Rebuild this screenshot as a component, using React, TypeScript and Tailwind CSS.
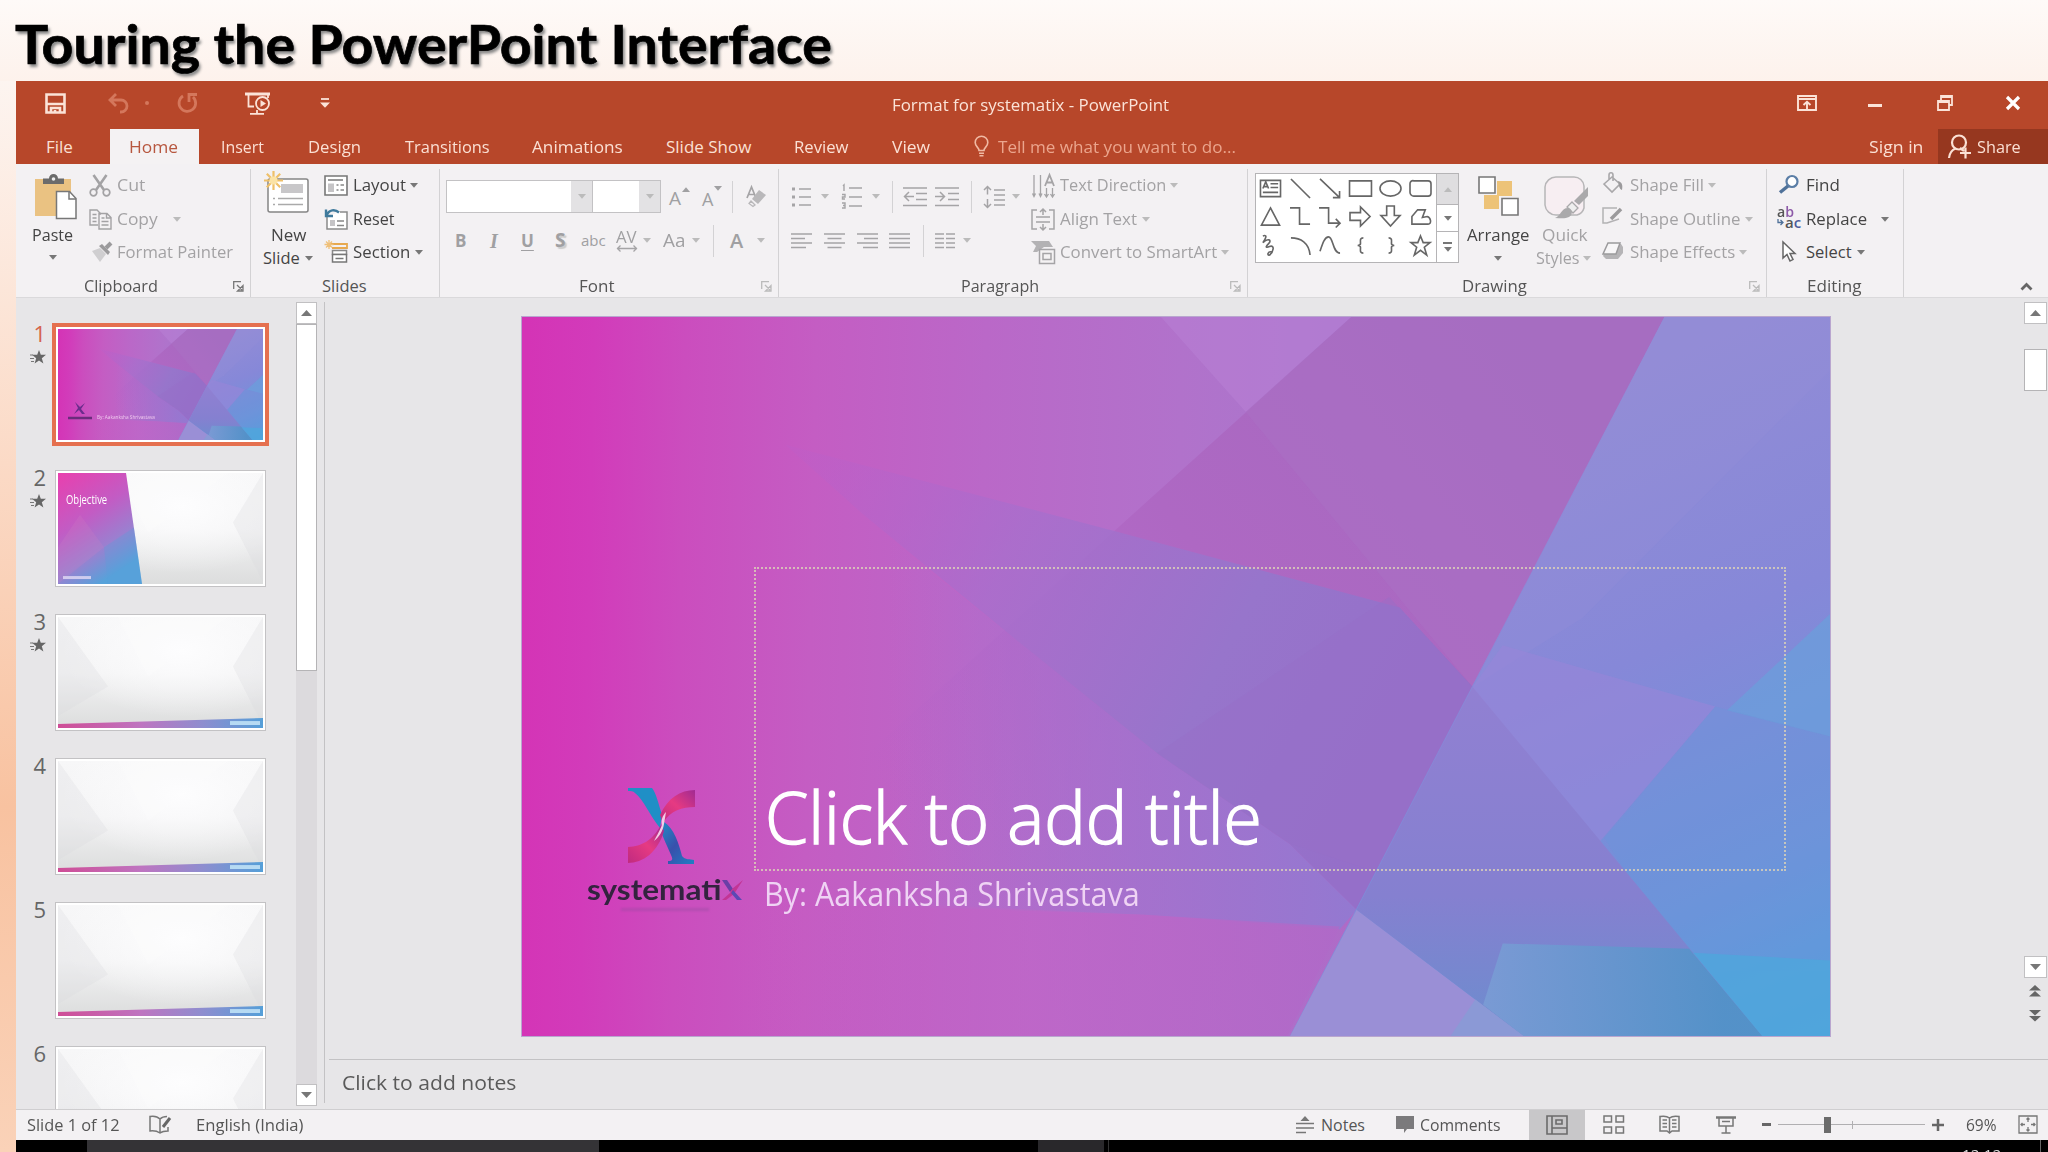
import { useLayoutEffect, useRef, useState } from "react";
import type { ReactNode } from "react";

/* Text condensed or stretched to a given width in pixels. */
function Fit({ w, children, className = "" }: { w: number; children: ReactNode; className?: string }) {
  const ref = useRef<HTMLSpanElement>(null);
  const [scale, setScale] = useState(1);
  useLayoutEffect(() => {
    if (ref.current && ref.current.offsetWidth) setScale(w / ref.current.offsetWidth);
  }, [w]);
  return (
    <span className={"block shrink-0 whitespace-nowrap " + className} style={{ width: w }}>
      <span ref={ref} className="inline-block origin-left" style={{ transform: `scaleX(${scale})` }}>
        {children}
      </span>
    </span>
  );
}

function Svg({ w, h, children, className = "", box }: { w: number; h: number; children: ReactNode; className?: string; box?: string }) {
  return (
    <svg width={w} height={h} viewBox={box ?? `0 0 ${w} ${h}`} fill="none" className={"block shrink-0 overflow-visible " + className}>
      {children}
    </svg>
  );
}

function Caret({ className = "text-[#777]" }: { className?: string }) {
  return (
    <Svg w={8} h={5} className={className}>
      <path d="M0 0h8L4 4.8z" fill="currentColor" />
    </Svg>
  );
}

function Sep({ className }: { className: string }) {
  return <div className={"h-8 w-px shrink-0 bg-[#d3d2d4] " + className} />;
}

function Launcher({ dim, className }: { dim?: boolean; className: string }) {
  return (
    <Svg w={11} h={11} className={(dim ? "text-[#bbb] " : "text-[#777] ") + className}>
      <path d="M.7 8V.7H8M4 4l5 5M10 4.5V10H4.5z" stroke="currentColor" strokeWidth="1.3" />
    </Svg>
  );
}

function Cmd({ icon, label, w, dim, caret, gap = "ml-[5px]" }: { icon: ReactNode; label: string; w: number; dim?: boolean; caret?: boolean; gap?: string }) {
  return (
    <div className={"flex h-[33.5px] items-center " + (dim ? "text-[#a3a2a4]" : "text-[#444]")}>
      <div className="flex w-[24px] shrink-0 justify-center">{icon}</div>
      <Fit w={w} className="ml-[5px]">{label}</Fit>
      {caret && <Caret className={gap + (dim ? " text-[#bbb]" : " text-[#777]")} />}
    </div>
  );
}

function Group({ width, children, label, lw, pad, launcher }: { width: string; children: ReactNode; label: string; lw: number; pad: string; launcher?: ReactNode }) {
  return (
    <div className={"flex h-full shrink-0 flex-col pt-[5px] " + width}>
      <div className="flex h-[128px] flex-col border-r border-[#d3d2d4]">
        <div className="flex h-[101px] items-start">{children}</div>
        <div className={"mt-[6px] flex h-[22px] items-center text-[#555] " + pad}>
          <Fit w={lw}>{label}</Fit>
          {launcher}
        </div>
      </div>
    </div>
  );
}

/* ---------- title bar and tabs ---------- */

function TitleBar() {
  return (
    <div className="flex h-[47px] items-center bg-[#b7472a] pb-[3px] pl-[29px] text-[#fbe3d8]">
      <Svg w={21} h={21}>
        <path d="M1.500 1.500h18v18h-18zM2 11h17M6 20v-5h9v5M10 20v-3" stroke="currentColor" strokeWidth="2.6" />
      </Svg>
      <Svg w={22} h={20} className="ml-[42px] text-[#d4775c]">
        <path d="M8 1L2 7l6 6M2.5 7H13a6 6 0 0 1 0 12h-1" stroke="currentColor" strokeWidth="2.8" />
      </Svg>
      <div className="ml-[15px] h-1 w-1 rounded-full bg-[#d4775c]" />
      <Svg w={20} h={20} className="ml-[29px] text-[#d4775c]">
        <path d="M5 3a8.3 8.3 0 1 0 10 1M11 9V1.5h8" stroke="currentColor" strokeWidth="2.8" />
      </Svg>
      <Svg w={26} h={23} className="ml-[47px]">
        <path d="M0 2h25" stroke="currentColor" strokeWidth="3" />
        <path d="M3.5 3v11.5H9M23 3v3M12 18v4M5 21.8h14" stroke="currentColor" strokeWidth="1.8" />
        <circle cx="17.5" cy="11.5" r="6.500" stroke="currentColor" strokeWidth="1.8" />
        <path d="M15.500 8v7l5.500-3.500z" fill="currentColor" />
      </Svg>
      <Svg w={10} h={10} className="ml-[49px]">
        <path d="M1 1h8" stroke="currentColor" strokeWidth="1.8" />
        <path d="M0 4.5h10L5 9.8z" fill="currentColor" />
      </Svg>
      <Fit w={277} className="mt-[5px] ml-[562px] text-[16.5px]">Format for systematix - PowerPoint</Fit>
      <Svg w={20} h={16} className="ml-[628px]">
        <path d="M1 1h18v14H1zM1 4h18M10 14V7M6.5 10L10 6.7l3.500 3.300" stroke="currentColor" strokeWidth="1.9" />
      </Svg>
      <div className="mt-1 ml-[51px] h-[3px] w-[14px] bg-current" />
      <Svg w={16} h={16} className="ml-[55px]">
        <path d="M1 6h11v9H1zM4 6V1h11v9h-3M4 2h11M1 7h11" stroke="currentColor" strokeWidth="1.8" />
      </Svg>
      <Svg w={14} h={14} className="ml-[53px] text-white">
        <path d="M1 1l12 12M13 1L1 13" stroke="currentColor" strokeWidth="3.2" />
      </Svg>
    </div>
  );
}

function Tabs() {
  return (
    <div className="flex h-[36px] items-stretch bg-[#b7472a] text-[17px] text-[#fbe0d4]">
      <div className="mt-[2px] flex w-[94px] items-center pl-[30px]"><Fit w={27}>File</Fit></div>
      <div className="mt-px flex w-[89px] items-center bg-[#f4f2f3] pl-[19px] text-[#b7573f]"><Fit w={49}>Home</Fit></div>
      <div className="flex items-center pt-px">
        <Fit w={43} className="ml-[22px]">Insert</Fit>
        <Fit w={53} className="ml-[44px]">Design</Fit>
        <Fit w={85} className="ml-[44px]">Transitions</Fit>
        <Fit w={91} className="ml-[42px]">Animations</Fit>
        <Fit w={85} className="ml-[43px]">Slide Show</Fit>
        <Fit w={55} className="ml-[43px]">Review</Fit>
        <Fit w={38} className="ml-[43px]">View</Fit>
        <Svg w={15} h={21} className="ml-[44px] text-[#f0b9a3]">
          <path d="M5 14.500c0-3-3.800-4-3.800-8a6.300 6.300 0 0 1 12.600 0c0 4-3.800 5-3.800 8zM5 17.300h5M5.500 19.800h4" stroke="currentColor" strokeWidth="1.6" />
        </Svg>
        <Fit w={238} className="ml-[9px] text-[#eba58d]">Tell me what you want to do...</Fit>
      </div>
      <div className="flex items-center pt-px">
        <Fit w={54} className="ml-[633px]">Sign in</Fit>
      </div>
      <div className="mt-[1px] ml-[15px] flex w-[110px] items-center bg-[#96371f] pl-[10px]">
        <Svg w={23} h={25}>
          <circle cx="11" cy="8.500" r="7" stroke="currentColor" strokeWidth="2.200" />
          <path d="M1 24c.5-5 3-8 6.500-9.500M12 14l4 3M17.500 13.500v11M12 19h11" stroke="currentColor" strokeWidth="2.200" />
        </Svg>
        <Fit w={44} className="ml-[6px]">Share</Fit>
      </div>
    </div>
  );
}

/* ---------- ribbon ---------- */

function Lines({ d, w = 22, h = 18 }: { d: string; w?: number; h?: number }) {
  return (
    <Svg w={w} h={h} className="text-[#a5a4a6]">
      <path d={d} stroke="currentColor" strokeWidth="1.500" />
    </Svg>
  );
}

function ClipboardGroup() {
  return (
    <Group width="w-[235px]" label="Clipboard" lw={74} pad="pl-[68px]" launcher={<Launcher className="ml-[75px]" />}>
      <div className="flex w-[72px] flex-col items-center pt-[6px] pl-[1px]">
        <Svg w={42} h={45} className="ml-[7px]">
          <path d="M0 4h36v37H0z" fill="#eac282" />
          <path d="M8 9V3.500h6a4.500 4.500 0 0 1 9 0h6V9z" fill="#6b6b6b" />
          <circle cx="18.500" cy="4" r="1.800" fill="#eee" />
          <path d="M21.500 16.500h13l6.500 7v20H21.500z" fill="#fff" stroke="#777" strokeWidth="1.500" />
          <path d="M34 17v7h7" stroke="#777" strokeWidth="1.500" />
        </Svg>
        <Fit w={41} className="mt-[3px] leading-[24px] text-[#444]">Paste</Fit>
        <Caret className="mt-[8px] text-[#777]" />
      </div>
      <div>
        <Cmd dim label="Cut" w={28} icon={
          <Svg w={22} h={22}>
            <path d="M4.500 0L15 15M17.500 0L7 15" stroke="#a3a2a4" strokeWidth="2.600" />
            <circle cx="4.500" cy="17.500" r="3.300" stroke="#a3a2a4" strokeWidth="1.700" />
            <circle cx="17.500" cy="17.500" r="3.300" stroke="#a3a2a4" strokeWidth="1.700" />
          </Svg>} />
        <Cmd dim label="Copy" w={41} caret gap="ml-[15px]" icon={
          <Svg w={23} h={21}>
            <path d="M9 16H1V1h7l3 3v2M3.500 5.500h4M3.500 9h4M3.500 12.500h4" stroke="#a3a2a4" strokeWidth="1.400" />
            <path d="M10 4.500h8l4 4V20H10zM17.500 5v4H22M12.500 9h3M12.500 12.500h7M12.500 16h7" stroke="#a3a2a4" strokeWidth="1.400" />
          </Svg>} />
        <Cmd dim label="Format Painter" w={116} icon={
          <Svg w={21} h={21} className="ml-1">
            <path d="M0 9l8-3 6 6-6 8z" fill="#cfced0" />
            <path d="M7 4l3-2 8 8-2 3z" fill="#9b9a9c" />
            <path d="M14 6l5-5" stroke="#9b9a9c" strokeWidth="4" />
          </Svg>} />
      </div>
    </Group>
  );
}

function SlidesGroup() {
  return (
    <Group width="w-[189px]" label="Slides" lw={45} pad="pl-[71px]">
      <div className="flex w-[73px] flex-col pt-[2px] text-[#444]">
        <Svg w={46} h={42} className="ml-[13px]">
          <rect x="4" y="8" width="40" height="33" rx="2" fill="#fff" stroke="#858585" strokeWidth="1.500" />
          <path d="M17 13h22v9H17z" fill="#c8c7c9" />
          <path d="M9 27.500h2M14 27.500h25M9 33.500h2M14 33.500h25" stroke="#aaa" strokeWidth="1.500" />
          <path d="M9.500 0v19M0 9.500h19M2.800 2.800l13.400 13.400M16.200 2.800L2.800 16.200" stroke="#efc069" strokeWidth="2.200" />
          <circle cx="9.500" cy="9.500" r="4" fill="#fbe3a6" />
        </Svg>
        <Fit w={35} className="mt-[10px] ml-[20px] leading-[24px]">New</Fit>
        <div className="flex items-center">
          <Fit w={37} className="ml-[12px] leading-[22px]">Slide</Fit>
          <Caret className="ml-[5px] text-[#777]" />
        </div>
      </div>
      <div>
        <Cmd label="Layout" w={53} caret gap="ml-[4px]" icon={
          <Svg w={24} h={21}>
            <path d="M1 1h22v19H1z" stroke="#777" strokeWidth="1.600" fill="#fff" />
            <path d="M4 5h15" stroke="#999" strokeWidth="2" />
            <path d="M4 8.500h6V17H4z" fill="#c5c4c6" />
            <path d="M12.500 10h2M16.500 10H20M12.500 15h2M16.500 15H20" stroke="#888" strokeWidth="1.400" />
          </Svg>} />
        <Cmd label="Reset" w={41} icon={
          <Svg w={24} h={22}>
            <path d="M3 8v13h20V4h-7" stroke="#8a8a8a" strokeWidth="1.500" fill="#fff" />
            <path d="M6 12h5v6H6z" fill="#c5c4c6" />
            <path d="M13 13h7M13 17.500h7" stroke="#888" strokeWidth="1.400" />
            <path d="M2 1.500V8h7M2.500 7.500c2.500-6 8.500-6.500 12.500-3" stroke="#3f7a9c" strokeWidth="2.400" />
          </Svg>} />
        <Cmd label="Section" w={57} caret icon={
          <Svg w={24} h={23} className="mt-[-2px]">
            <path d="M6 4h17v4H8" stroke="#e7a94f" strokeWidth="1.800" />
            <path d="M8.500 10.500h14v4h-14z" stroke="#888" strokeWidth="1.500" fill="#fff" />
            <path d="M8.500 14.500h14v7.500h-14zM11.500 18.500h8" stroke="#777" strokeWidth="1.500" fill="#fff" />
            <path d="M5 0v9M.5 4.500h9M2 1.500l6 6M8 1.500l-6 6" stroke="#efc079" strokeWidth="1.300" />
          </Svg>} />
      </div>
    </Group>
  );
}

function FontGroup() {
  return (
    <Group width="w-[339px]" label="Font" lw={35} pad="pl-[139px]" launcher={<Launcher dim className="ml-[147px]" />}>
      <div className="flex flex-col pt-[11px] text-[#a0a0a2]">
        <div className="flex h-[33px] items-center pl-[6px]">
          <div className="flex h-[33px] w-[147px] justify-end border-[1.500px] border-[#c3c2c4] bg-white">
            <div className="flex w-[21px] items-center justify-center bg-[#e3e2e4]"><Caret className="text-[#bbb]" /></div>
          </div>
          <div className="flex h-[33px] w-[68px] justify-end border border-l-0 border-[#c3c2c4] bg-white">
            <div className="flex w-[21px] items-center justify-center bg-[#e3e2e4]"><Caret className="text-[#bbb]" /></div>
          </div>
          <span className="mt-[4px] ml-[8px] w-[13px] text-[19px] leading-none">A</span>
          <Caret className="mb-[15px] rotate-180 text-[#a0a0a2]" />
          <span className="mt-[5px] ml-[12px] w-[12px] text-[18px] leading-none">A</span>
          <Caret className="mb-[17px] text-[#a0a0a2]" />
          <Sep className="ml-[10px]" />
          <Svg w={22} h={24} className="ml-[13px]">
            <path d="M1 13L5.500 2 10 13M2.500 9.500h6" stroke="#a5a4a6" strokeWidth="1.700" />
            <path d="M13 5l7 5-8 9-6-5z" fill="#b9b8ba" />
            <path d="M5 16l4 4-2 1.500-4-3z" stroke="#b9b8ba" strokeWidth="1.300" />
          </Svg>
        </div>
        <div className="mt-[11px] flex h-[33px] items-center pl-[15px]">
          <span className="w-[35px] text-[17px] font-bold">B</span>
          <span className="w-[31px] font-['Liberation_Serif',serif] text-[20px] font-bold italic">I</span>
          <span className="w-[34px] text-[17px] font-bold underline underline-offset-[3px]">U</span>
          <span className="w-[26px] text-[19px] font-bold [text-shadow:2px_2px_1px_#ccc]">S</span>
          <Fit w={25} className="text-[15px] line-through">abc</Fit>
          <div className="ml-[9px] flex w-[23px] flex-col items-center">
            <Fit w={21} className="text-[16px] leading-[14px]">AV</Fit>
            <Svg w={22} h={7} className="mt-[1px]"><path d="M1 3.500h20M4.500.5l-3 3 3 3M17.500.5l3 3-3 3" stroke="#a5a4a6" strokeWidth="1.300" /></Svg>
          </div>
          <Caret className="ml-[5px] text-[#bbb]" />
          <Fit w={22} className="ml-[12px] text-[18px]">Aa</Fit>
          <Caret className="ml-[7px] text-[#bbb]" />
          <Sep className="ml-[13px]" />
          <span className="ml-[16px] w-[14px] text-[20px] font-semibold">A</span>
          <Caret className="ml-[13px] text-[#bbb]" />
        </div>
      </div>
    </Group>
  );
}

function ParagraphGroup() {
  return (
    <Group width="w-[469px]" label="Paragraph" lw={78} pad="pl-[182px]" launcher={<Launcher dim className="ml-[191px]" />}>
      <div className="flex w-[252px] flex-col pt-[11px] pl-[12px]">
        <div className="flex h-[33px] items-center">
          <Svg w={20} h={20}>
            <path d="M8 2h12M8 10h12M8 18h12" stroke="#a5a4a6" strokeWidth="1.500" />
            <path d="M1 .5h3v3H1zM1 8.500h3v3H1zM1 16.500h3v3H1z" fill="#a5a4a6" />
          </Svg>
          <Caret className="ml-[10px] text-[#bbb]" />
          <Svg w={21} h={24} className="ml-[12px]">
            <path d="M8 3h13M8 12h13M8 21h13M2 1l1-1v6M1 9.500h3v2.500H1.500V14H4M1 18h3v5H1M2 20.500h2" stroke="#a5a4a6" strokeWidth="1.400" />
          </Svg>
          <Caret className="ml-[10px] text-[#bbb]" />
          <Sep className="ml-[12px]" />
          <div className="ml-[10px]"><Lines w={24} h={20} d="M0 1h24M13 6.500h11M13 12.500h11M0 18.500h24M11 9.500H2M6 5L1.500 9.500 6 14" /></div>
          <div className="ml-[8px]"><Lines w={24} h={20} d="M0 1h24M13 6.500h11M13 12.500h11M0 18.500h24M0 9.500h9M5 5l4.500 4.500L5 14" /></div>
          <Sep className="ml-[12px]" />
          <div className="ml-[11px]"><Lines w={22} h={24} d="M4.500 1.500v8M1 5l3.500-3.500L8 5M4.500 14v8.500M1 19l3.500 3.500L8 19M11 5h11M11 10h11M11 15h11M11 20h11" /></div>
          <Caret className="ml-[7px] text-[#bbb]" />
        </div>
        <div className="mt-[11px] flex h-[33px] items-center">
          <Lines d="M0 2h21M0 6.500h14M0 11h21M0 15.500h15" />
          <div className="ml-[11px]"><Lines d="M0 2h21M3.500 6.500h14M0 11h21M3.500 15.500h14" /></div>
          <div className="ml-[11px]"><Lines d="M0 2h21M7 6.500h14M0 11h21M6 15.500h15" /></div>
          <div className="ml-[10px]"><Lines d="M0 2h21M0 6.500h21M0 11h21M0 15.500h21" /></div>
          <Sep className="ml-[12px]" />
          <div className="ml-[11px]"><Lines d="M0 2h9M11 2h9M0 6.500h9M11 6.500h9M0 11h9M11 11h9M0 15.500h9M11 15.500h9" /></div>
          <Caret className="ml-[6px] text-[#bbb]" />
        </div>
      </div>
      <div>
        <Cmd dim label="Text Direction" w={106} caret gap="ml-[4px]" icon={
          <Svg w={23} h={24}>
            <path d="M2 1v21M8.500 1v21M.500 19.500l1.500 3 1.500-3M7 19.500l1.500 3 1.500-3M14.500 14v9M20.500 14v9M12.500 20l2 3 2-3M18.500 20l2 3 2-3" stroke="#a5a4a6" strokeWidth="1.300" />
            <path d="M13 12L17.500 1 22 12M14.500 8.500h6" stroke="#a5a4a6" strokeWidth="1.800" />
          </Svg>} />
        <Cmd dim label="Align Text" w={77} caret icon={
          <Svg w={24} h={23}>
            <path d="M6 2H1v19h5M18 2h5v19h-5M5 9h14M5 14h14M12 1v6M12 16v6M9 4l3-3 3 3M9 19l3 3 3-3" stroke="#a5a4a6" strokeWidth="1.500" />
          </Svg>} />
        <Cmd dim label="Convert to SmartArt" w={157} caret gap="ml-[4px]" icon={
          <Svg w={24} h={23}>
            <path d="M0 0h18l4 6h-9L6 11H2l3-6z" fill="#b3b2b4" />
            <path d="M8.500 8.500h15v14h-15zM12 12.500h8v6h-8z" stroke="#a5a4a6" strokeWidth="1.500" fill="#f4f2f3" />
          </Svg>} />
      </div>
    </Group>
  );
}

const SHAPES = [
  "M.5 2.500h21v17H.5zM3 11l3-7 3 7M4 9h4M11 6h8M11 10h8M3 15h16",
  "M1 1l20 20",
  "M0 1l20 19M20.500 13.500V20.500H13.500",
  "M-.5 3h23v16h-23z",
  "M22 11c0 4.500-4.900 8-11 8S0 15.500 0 11s4.900-8 11-8 11 3.500 11 8z",
  "M4 3h15a3 3 0 0 1 3 3v10a3 3 0 0 1-3 3H4a4 4 0 0 1-4-4V6a3 3 0 0 1 4-3z",
  "M11 2l9.500 18h-19z",
  "M0 2h10v17h11",
  "M-1 2h10v16h12M16.500 13.500L21 18l-4.500 4.500",
  "M0 7h11V1l10 10-10 10v-6H0z",
  "M7 0h8v10h6L11 21 1 10h6z",
  "M2 19h17c4 0 3-7-1-8l-5 1 3-8H8L2 11z",
  "M3 1c6-2 2 4 0 7 5-5 10-3 6 1-3 3-4 5 1 3 6-2 4 6 0 9-3 1-2-5 3-3",
  "M1 3c10 0 19 5 20 18",
  "M0 17C3 8 5 2 9 2c5 0 4 17 12 17",
  "M14 3c-4 0-3 3-3 6 0 1-1 2-3 2 2 0 3 1 3 2 0 3-1 6 3 6",
  "M9 3c4 0 3 3 3 6 0 1 1 2 3 2-2 0-3 1-3 2 0 3 1 6-3 6",
  "M11 1l2.800 7H21l-6 4.800L17.500 21 11 16l-6.500 5L7 12.800 1 8h7.200z",
];

function DrawingGroup() {
  return (
    <Group width="w-[519px]" label="Drawing" lw={65} pad="pl-[214px]" launcher={<Launcher dim className="ml-[222px]" />}>
      <div className="mt-[4px] ml-[7px] flex h-[90px] w-[204px] border-[1.500px] border-[#b5b4b6] bg-white">
        <div className="grid w-[180px] grid-cols-6 grid-rows-3 place-items-center pr-px pb-[2px] text-[#666]">
          {SHAPES.map((d, i) => (
            <Svg key={i} w={21} h={21} box="0 0 22 22">
              <path d={d} stroke="currentColor" strokeWidth="1.700" />
            </Svg>
          ))}
        </div>
        <div className="flex grow flex-col border-l border-[#b5b4b6]">
          <div className="flex h-[30px] items-center justify-center bg-[#dfdee0]"><Caret className="rotate-180 text-[#bbb]" /></div>
          <div className="flex h-[28px] items-center justify-center border-y border-[#b5b4b6]"><Caret /></div>
          <div className="flex grow flex-col items-center justify-center gap-[3px]">
            <div className="h-[1.500px] w-[9px] bg-[#777]" />
            <Caret />
          </div>
        </div>
      </div>
      <div className="ml-[7px] flex w-[64px] flex-col items-center pt-[7px] text-[#444]">
        <Svg w={41} h={40}>
          <path d="M19 5h15v15H19zM6 19h15v14H6z" fill="#edc378" />
          <path d="M1 1h16v16H1zM24 22.500h16V39H24z" fill="#fff" stroke="#777" strokeWidth="1.600" />
        </Svg>
        <Fit w={62} className="mt-[8px] leading-[22px]">Arrange</Fit>
        <Caret className="mt-[10px] text-[#777]" />
      </div>
      <div className="ml-[7px] flex w-[56px] flex-col pt-[7px] text-[#a3a2a4]">
        <Svg w={45} h={44} className="ml-[7px]">
          <path d="M12 1h18a10 10 0 0 1 10 9v22a10 10 0 0 1-7 7H12A11 11 0 0 1 1 29V11A11 11 0 0 1 12 1z" fill="#f7eef2" stroke="#b7b6b8" strokeWidth="1.500" />
          <path d="M44 11v9l-9 9-5-4z" fill="#aaa9ab" />
          <path d="M28 26l6 6-5 5-6-6z" fill="#eee" stroke="#aaa9ab" strokeWidth="1.300" />
          <path d="M11 42c6-2 6-10 13-10 5 1 5 7 1 9-4 2-9 1-14 1z" fill="#aaa9ab" />
        </Svg>
        <Fit w={46} className="mt-[4px] ml-[5px] leading-[22px]">Quick</Fit>
        <div className="flex items-center pt-px">
          <Fit w={44} className="ml-[-1px] leading-[22px]">Styles</Fit>
          <Caret className="ml-[3px] text-[#bbb]" />
        </div>
      </div>
      <div className="ml-[8px]">
        <Cmd dim label="Shape Fill" w={74} caret gap="ml-[4px]" icon={
          <Svg w={20} h={22} className="mt-[-5px]">
            <path d="M1 12l8-7 8 7-8 8zM6 8V3c0-3 4-3 4 0v6" stroke="#a9a8aa" strokeWidth="1.600" />
            <path d="M15 9c4 1 5 4 4 9-3-1-3-5-4-9z" fill="#9b9a9c" />
          </Svg>} />
        <Cmd dim label="Shape Outline" w={111} caret gap="ml-[4px]" icon={
          <Svg w={22} h={20} className="mt-[-6px]">
            <path d="M15 2H1v15h4l12-4" stroke="#b3b2b4" strokeWidth="1.500" />
            <path d="M9 13L19 3" stroke="#9b9a9c" strokeWidth="3.500" />
          </Svg>} />
        <Cmd dim label="Shape Effects" w={105} caret gap="ml-[4px]" icon={
          <Svg w={22} h={18} className="mt-[-4px]">
            <path d="M7 2h12l2 3v6l-5 6H4l-3-3z" fill="#b5b4b6" />
            <path d="M6 1h12l-4 11H1z" stroke="#9b9a9c" strokeWidth="1.500" fill="#f7f6f7" />
          </Svg>} />
      </div>
    </Group>
  );
}

function EditingGroup() {
  return (
    <Group width="w-[137px]" label="Editing" lw={55} pad="pl-[40px]">
      <div className="ml-[10px]">
        <Cmd label="Find" w={34} icon={
          <Svg w={20} h={18} className="mt-[-3px]">
            <circle cx="13" cy="6.500" r="5.500" stroke="#5b7ea6" strokeWidth="2.200" fill="#fff" />
            <path d="M9 11l-8 6.500" stroke="#4f7199" strokeWidth="3.500" />
          </Svg>} />
        <Cmd label="Replace" w={61} caret gap="ml-[14px]" icon={
          <div className="mt-[-4px] flex w-[24px] flex-col text-[15px] leading-[11px]">
            <Fit w={17} className="font-semibold"><span className="text-[#555]">a</span><span className="text-[#8d5aa8]">b</span></Fit>
            <div className="flex items-center">
              <Svg w={6} h={7} className="mr-[2px]"><path d="M1 0v3.500h5M3.500 1l2.500 2.500L3.500 6" stroke="#4f7199" strokeWidth="1.300" /></Svg>
              <Fit w={16} className="font-semibold"><span className="text-[#555]">a</span><span className="text-[#4b5c9c]">c</span></Fit>
            </div>
          </div>} />
        <Cmd label="Select" w={46} caret icon={
          <Svg w={14} h={21} className="mt-[-3px]">
            <path d="M1 1v16l4-3.500 3 6.500 3-1.500-3-6h5z" stroke="#666" strokeWidth="1.500" fill="#fff" />
          </Svg>} />
      </div>
    </Group>
  );
}

function Ribbon() {
  return (
    <div className="flex h-[134px] border-b border-[#dad9db] bg-[#f3f1f3] text-[16.500px]">
      <ClipboardGroup />
      <SlidesGroup />
      <FontGroup />
      <ParagraphGroup />
      <DrawingGroup />
      <EditingGroup />
      <Svg w={13} h={9} className="mt-[118px] ml-[116px]">
        <path d="M1.500 7.500l5-5 5 5" stroke="#666" strokeWidth="2.800" />
      </Svg>
    </div>
  );
}

/* ---------- slide art ---------- */

function SlideArt({ id, className }: { id: string; className: string }) {
  const g = (n: string) => `url(#${id}${n})`;
  return (
    <svg viewBox="399 242 1003 552" preserveAspectRatio="none" className={"block " + className}>
      <defs>
        <linearGradient id={id + "base"} gradientUnits="userSpaceOnUse" x1="399" y1="500" x2="1402" y2="520">
          <stop offset="0" stopColor="#d434b6" />
          <stop offset=".05" stopColor="#d23bba" />
          <stop offset=".12" stopColor="#cb4dbe" />
          <stop offset=".22" stopColor="#c45dc3" />
          <stop offset=".35" stopColor="#ba68c8" />
          <stop offset=".5" stopColor="#b172cb" />
          <stop offset=".65" stopColor="#a678cd" />
          <stop offset="1" stopColor="#8a84d4" />
        </linearGradient>
        <linearGradient id={id + "right"} gradientUnits="userSpaceOnUse" x1="1180" y1="300" x2="1400" y2="794">
          <stop offset="0" stopColor="#938cd6" />
          <stop offset=".4" stopColor="#8688d8" />
          <stop offset=".75" stopColor="#6f92da" />
          <stop offset="1" stopColor="#529fdc" />
        </linearGradient>
        <linearGradient id={id + "fold"} gradientUnits="userSpaceOnUse" x1="600" y1="360" x2="1060" y2="600">
          <stop offset="0" stopColor="#b95fcb" stopOpacity=".25" />
          <stop offset=".35" stopColor="#a66fcd" stopOpacity=".7" />
          <stop offset=".7" stopColor="#9775cb" />
          <stop offset="1" stopColor="#956fc9" />
        </linearGradient>
        <linearGradient id={id + "band"} gradientUnits="userSpaceOnUse" x1="1180" y1="260" x2="700" y2="640">
          <stop offset="0" stopColor="#a36abf" />
          <stop offset=".5" stopColor="#ae68c3" />
          <stop offset="1" stopColor="#ba60c8" stopOpacity="0" />
        </linearGradient>
        <linearGradient id={id + "low"} gradientUnits="userSpaceOnUse" x1="680" y1="0" x2="1040" y2="0">
          <stop offset="0" stopColor="#a870d0" stopOpacity="0" />
          <stop offset=".5" stopColor="#a073cf" stopOpacity=".7" />
          <stop offset="1" stopColor="#9379d1" />
        </linearGradient>
        <linearGradient id={id + "pink"} gradientUnits="userSpaceOnUse" x1="560" y1="0" x2="1020" y2="0">
          <stop offset="0" stopColor="#cc54c0" stopOpacity="0" />
          <stop offset=".5" stopColor="#c065c8" />
          <stop offset="1" stopColor="#b069c8" />
        </linearGradient>
        <linearGradient id={id + "wedge"} gradientUnits="userSpaceOnUse" x1="0" y1="526" x2="0" y2="794">
          <stop offset="0" stopColor="#9180d2" />
          <stop offset=".6" stopColor="#8580d0" />
          <stop offset="1" stopColor="#6c8dce" />
        </linearGradient>
        <linearGradient id={id + "teal"} gradientUnits="userSpaceOnUse" x1="1120" y1="0" x2="1320" y2="0">
          <stop offset="0" stopColor="#7e9dd6" />
          <stop offset="1" stopColor="#5192c8" />
        </linearGradient>
      </defs>
      <path d="M399 242h1003v552H399z" fill={g("base")} />
      <path d="M889 242h146l-81 73z" fill="#b87fd4" opacity=".6" />
      <path d="M1035 242h240L988 794H437L640 599z" fill={g("band")} />
      <path d="M954 315l174 211 147-284h-240z" fill="#aa74c6" opacity=".4" />
      <path d="M640 380l138 110 108 87 101 69 52 51-13 15-150-11-216-10-120-92z" fill={g("low")} />
      <path d="M601 340l255 67 216 58 56 61-89 171-52-51-101-69-108-87-118-97z" fill={g("fold")} />
      <path d="M886 577l178-120 64 69-74 142-67-22z" fill="#976fc7" opacity=".45" />
      <path d="M560 690l316 11 150 9-40 84H470z" fill={g("pink")} opacity=".75" />
      <path d="M1275 242h127v552H988z" fill={g("right")} />
      <path d="M1402 283l-190 190-84 53 147-284h127z" fill="#9690d8" opacity=".3" />
      <path d="M1128 526l23-32 163 47-104 122z" fill="#9685d8" opacity=".65" />
      <path d="M1402 470l-79 74 79 20z" fill="#6a9fdc" opacity=".7" />
      <path d="M1314 541l88 23v180h-110l-63-102z" fill="#6898dc" opacity=".3" />
      <path d="M1039 697l-51 97h179z" fill="#9a8fd6" />
      <path d="M1128 526l222 268h-183l-128-97z" fill={g("wedge")} />
      <path d="M1151 723l143 4 56 67h-183l-31-24z" fill={g("teal")} opacity=".9" />
      <path d="M1130 766l37 28h-56z" fill="#8b99d6" />
      <path d="M1297 730l105 6v58h-52z" fill="#4fa6dc" opacity=".8" />
    </svg>
  );
}

function SystematixMark() {
  return (
    <Svg w={68} h={76}>
      <defs>
        <linearGradient id="markBlue" x1="0" y1="0" x2="1" y2="1">
          <stop offset="0" stopColor="#1f8fc6" />
          <stop offset=".5" stopColor="#3850ac" />
          <stop offset="1" stopColor="#1f7fc4" />
        </linearGradient>
        <linearGradient id="markPink" x1="1" y1="0" x2="0" y2="1">
          <stop offset="0" stopColor="#a02a92" />
          <stop offset=".5" stopColor="#e63a82" />
          <stop offset="1" stopColor="#c02a80" />
        </linearGradient>
      </defs>
      <path d="M0 0h24c4 5 6 14 10 27l-2 13C22 28 16 12 7 5 5 3 3 3 0 3z" fill="#1f8fc6" />
      <path d="M36 34c10 6 15 22 18 34 3 4 8 3 12 4v4H40v-3c5 0 5-2 3-6-4-9-8-18-11-26z" fill="url(#markBlue)" />
      <path d="M67 2v17C54 19 43 22 35 35l-3-8C40 10 52 2 67 2z" fill="url(#markPink)" />
      <path d="M0 75V59c14-1 24-6 33-22l3 6C30 64 15 75 0 75z" fill="url(#markPink)" />
      <path d="M38 24c-4 4-5 9-4 13-3 7-6 12-8 16 5-4 9-10 10-17z" fill="#f3cbe6" />
    </Svg>
  );
}

function Slide() {
  return (
    <div className="relative h-[721px] w-[1310px] shrink-0 border border-[#b9a6cf]">
      <SlideArt id="main" className="h-full w-full" />
      <div className="absolute inset-0 flex">
        <div className="flex w-[232px] flex-col pt-[471px] pl-[65px]">
          <div className="pl-[41px]"><SystematixMark /></div>
          <div className="mt-[9px] flex text-[28px] leading-[32px] font-medium text-[#33233f]">
            <Fit w={135} className="font-['Lato'] font-bold">systemati</Fit>
            <Svg w={21} h={20} className="mt-[7px]">
              <path d="M0 0h5l6 9-3 3z" fill="#6a3fa6" />
              <path d="M21 0L10 9 8 13l-8 7h4l8-6z" fill="#c33594" />
              <path d="M11 10l9 10h-5l-6-7z" fill="#5b49b4" />
            </Svg>
          </div>
          <div className="mt-[3px] ml-[34px] h-[3px] w-[88px] bg-[#8a4a9c]/35 blur-[1px]" />
        </div>
        <div className="flex flex-col pt-[250px] text-white">
          <div className="flex h-[304px] w-[1032px] items-end border-2 border-dotted border-[#ddd3b8]/80 pb-[4px] pl-[9px]">
            <Fit w={497} className="text-[72px] leading-[98px] font-light [-webkit-text-stroke:1.500px_white]">Click to add title</Fit>
          </div>
          <Fit w={376} className="mt-[3px] ml-[10px] text-[32px] leading-[40px] text-[#efd3f4]">By: Aakanksha Shrivastava</Fit>
        </div>
      </div>
    </div>
  );
}

/* ---------- thumbnails ---------- */

function PlainSlide({ cut }: { cut?: boolean }) {
  return (
    <div className="relative h-full w-full bg-linear-to-b from-[#f7f7f8] via-[#f3f3f4] to-[#dcdddd]">
      <svg viewBox="0 0 205 112" preserveAspectRatio="none" className="block h-full w-full">
        <defs>
          <radialGradient id="glow" cx=".6" cy=".3" r=".6">
            <stop offset="0" stopColor="#fdfdfe" />
            <stop offset="1" stopColor="#fdfdfe" stopOpacity="0" />
          </radialGradient>
          <linearGradient id="strip">
            <stop offset="0" stopColor="#cf4d96" />
            <stop offset=".4" stopColor="#bf74c0" />
            <stop offset=".7" stopColor="#8f8dcf" />
            <stop offset="1" stopColor="#559fd8" />
          </linearGradient>
        </defs>
        <path d="M0 0h205v112H0z" fill="url(#glow)" />
        <path d="M0 0l50 70L0 100zM205 0v110l-30-60z" fill="#d9d9db" opacity=".25" />
        <path d="M60 0l30 60 80-60z" fill="#fff" opacity=".2" />
        {!cut && <path d="M0 108L205 102v10H0z" fill="url(#strip)" />}
        {!cut && <path d="M172 105h30v4h-30z" fill="#b6daf3" />}
      </svg>
    </div>
  );
}

function ObjectiveSlide() {
  return (
    <div className="relative h-full w-full">
      <PlainSlide cut />
      <svg viewBox="0 0 205 112" preserveAspectRatio="none" className="absolute inset-0 h-full w-full">
        <defs>
          <linearGradient id="obj" x1="0" y1="0" x2=".5" y2="1">
            <stop offset="0" stopColor="#e93fae" />
            <stop offset=".45" stopColor="#c25cc4" />
            <stop offset=".75" stopColor="#9a80d0" />
            <stop offset="1" stopColor="#56a2da" />
          </linearGradient>
        </defs>
        <path d="M0 0h68l16 112H0z" fill="url(#obj)" />
        <path d="M22 42l24 33L0 112V75z" fill="#d184c4" opacity=".2" />
        <path d="M46 75l30-20 8 57H50z" fill="#5a9fdc" opacity=".3" />
        <path d="M5 104h28v3H5z" fill="#e4dbf5" opacity=".8" />
      </svg>
      <Fit w={41} className="absolute top-[17px] left-[8px] text-[12px] leading-[20px] text-white">Objective</Fit>
    </div>
  );
}

function MiniTitleSlide() {
  return (
    <div className="relative h-full w-full">
      <SlideArt id="mini" className="h-full w-full" />
      <div className="absolute top-[72px] left-[10px] flex items-end">
        <svg width="24" height="20" viewBox="0 0 24 20" className="block">
          <path d="M7 1l5 5 5-4-4 6 4 5h-3l-3-4-5 4 4-6z" fill="#6b2c8c" />
          <path d="M0 17h24" stroke="#6b2c7c" strokeWidth="2.500" />
        </svg>
        <Fit w={58} className="ml-[5px] text-[6px] leading-[7px] text-[#efc8ee]">By: Aakanksha Shrivastava</Fit>
      </div>
    </div>
  );
}

const THUMBS = [
  { n: 1, star: true },
  { n: 2, star: true },
  { n: 3, star: true },
  { n: 4, star: false },
  { n: 5, star: false },
  { n: 6, star: false },
];

function Thumbnails() {
  return (
    <div className="flex h-full w-[280px] flex-col overflow-hidden pt-[28px]">
      {THUMBS.map(({ n, star }) => (
        <div key={n} className="flex h-[144px] shrink-0">
          <div className="flex w-[39px] flex-col items-end pr-[9px]">
            <span className={"mt-[-2px] text-[22px] leading-[18px] " + (n === 1 ? "text-[#d5644b]" : "text-[#666]")}>{n}</span>
            {star && (
              <Svg w={16} h={14} className="mt-[8px]">
                <path d="M9 0l1.800 4.800H16l-4.200 3.400 1.600 5.300L9 10.500l-4.400 3 1.600-5.300L2 4.800h5.200z" fill="#666" />
                <path d="M0 5h3M0 8.500h4M1 11.500h3" stroke="#777" strokeWidth="1" />
              </Svg>
            )}
          </div>
          <div className={"h-[117px] w-[211px] border border-[#c3c2c4] bg-white p-[2px] " + (n === 1 ? "outline-[4px] -outline-offset-1 outline-[#e5704f]" : "")}>
            {n === 1 ? <MiniTitleSlide /> : n === 2 ? <ObjectiveSlide /> : <PlainSlide />}
          </div>
        </div>
      ))}
    </div>
  );
}

/* ---------- body ---------- */

function ScrollButton({ up }: { up?: boolean }) {
  return (
    <div className="flex h-[22px] w-full items-center justify-center border border-[#c1c0c2] bg-white">
      <Svg w={11} h={6} className={up ? "rotate-180" : ""}><path d="M0 0h11L5.500 6z" fill="#777" /></Svg>
    </div>
  );
}

function Body() {
  return (
    <div className="flex h-[811px] bg-[#e7e6e8]">
      <Thumbnails />
      <div className="flex w-[21px] flex-col pt-[4px]">
        <ScrollButton up />
        <div className="h-[347px] border border-[#b5b4b6] bg-white" />
        <div className="h-[413px] bg-[#dcdadd]" />
        <ScrollButton />
      </div>
      <div className="mt-[4px] ml-[7px] h-[801px] w-px bg-[#c3c2c4]" />
      <div className="flex w-[1699px] flex-col pl-[4px]">
        <div className="flex h-[762px] border-b border-[#c3c2c4] pt-[18px] pl-[192px]">
          <Slide />
        </div>
        <div className="flex h-[49px] items-center pl-[13px] text-[20px] text-[#5a5a5a]">
          <Fit w={174} className="mt-[-3px]">Click to add notes</Fit>
        </div>
      </div>
      <div className="flex w-[24px] flex-col">
        <div className="flex h-[762px] flex-col border-b border-[#c3c2c4] pt-[4px] pr-[1px]">
          <ScrollButton up />
          <div className="h-[25px]" />
          <div className="h-[42px] border border-[#b5b4b6] bg-white" />
          <div className="h-[565px]" />
          <ScrollButton />
          <Svg w={12} h={12} className="mt-[7px] ml-[5px]"><path d="M6 0l6 5.500H0zM6 6l6 5.500H0z" fill="#666" /></Svg>
          <Svg w={12} h={12} className="mt-[13px] ml-[5px]"><path d="M6 5.500L12 0H0zM6 11.500L12 6H0z" fill="#666" /></Svg>
        </div>
      </div>
    </div>
  );
}

function StatusBar() {
  return (
    <div className="flex h-[31px] items-center border-t border-[#cfced0] bg-[#f3f1f3] pb-px pl-[11px] text-[16px] text-[#555]">
      <Fit w={93}>Slide 1 of 12</Fit>
      <Svg w={24} h={20} className="ml-[29px]">
        <path d="M11 18V4C8 1 4 1 1 1.500V16c4-.5 7 0 10 2 2-1.500 4-2 8-2V12M11 4c2-2 4-2.500 7-2.500" stroke="#777" strokeWidth="1.500" />
        <path d="M14 12l7-9" stroke="#666" strokeWidth="3" />
      </Svg>
      <Fit w={108} className="ml-[23px]">English (India)</Fit>
      <Svg w={18} h={18} className="ml-[992px]">
        <path d="M9 0l4.500 5h-9z" fill="#777" />
        <path d="M0 7.500h18M0 12h18M0 16.500h10" stroke="#777" strokeWidth="1.600" />
      </Svg>
      <Fit w={44} className="ml-[7px]">Notes</Fit>
      <Svg w={18} h={17} className="ml-[31px]"><path d="M0 0h18v13h-7l-3 4v-4H0z" fill="#7b7a7c" /></Svg>
      <Fit w={80} className="ml-[6px]">Comments</Fit>
      <div className="ml-[29px] flex h-[30px] w-[56px] items-center justify-center bg-[#c8c7c9]">
        <Svg w={22} h={20}>
          <path d="M1 1h20v18H1zM6 1v18M6 13h15M10 5h6v4h-6z" stroke="#6b6b6b" strokeWidth="1.600" />
        </Svg>
      </div>
      <Svg w={22} h={19} className="ml-[18px]">
        <path d="M1 1h7.500v6H1zM13 1h7.500v6H13zM1 12h7.500v6H1zM13 12h7.500v6H13z" stroke="#777" strokeWidth="1.500" />
      </Svg>
      <Svg w={21} h={19} className="ml-[34px]">
        <path d="M10.500 18V3C8 1 4 1 1 1.500V16h7l2.500 2 2.500-2h7V1.500C17 1 13 1 10.500 3M3.500 5h4.500M3.500 8.500h4.500M3.500 12h4.500M13 5h4.500M13 8.500h4.500M13 12h4.500" stroke="#777" strokeWidth="1.500" />
      </Svg>
      <Svg w={20} h={18} className="ml-[36px]">
        <path d="M0 1.500h20" stroke="#777" strokeWidth="2.500" />
        <path d="M3 2v8h14V2M10 10v7M5.500 17h9M6 5.500h8" stroke="#777" strokeWidth="1.500" />
      </Svg>
      <div className="ml-[26px] h-[3px] w-[9px] bg-[#666]" />
      <div className="ml-[7px] flex w-[147px] items-center">
        <div className="h-[1.500px] w-[46px] bg-[#b0afb1]" />
        <div className="h-[16px] w-[7px] bg-[#6b6b6b]" />
        <div className="h-[1.500px] w-[21px] bg-[#b0afb1]" />
        <div className="h-[8px] w-px bg-[#b0afb1]" />
        <div className="h-[1.500px] grow bg-[#b0afb1]" />
      </div>
      <Svg w={12} h={12} className="ml-[7px]"><path d="M6 0v12M0 6h12" stroke="#666" strokeWidth="2.500" /></Svg>
      <Fit w={31} className="ml-[22px]">69%</Fit>
      <Svg w={20} h={19} className="ml-[21px]">
        <path d="M1 1h18v17H1zM10 3v4M10 12v4M3 9.500h4M13 9.500h4M8.500 4.500L10 3l1.500 1.500M8.500 14.500L10 16l1.500-1.500M4.500 8L3 9.500 4.500 11M15.500 8L17 9.500 15.500 11" stroke="#777" strokeWidth="1.300" />
      </Svg>
    </div>
  );
}

function Taskbar() {
  return (
    <div className="flex h-[12px] overflow-hidden bg-black">
      <div className="ml-[71px] w-[512px] bg-[#343336]" />
      <div className="ml-[439px] w-[66px] bg-[#29282b]" />
      <div className="ml-[4px] w-px bg-[#333]" />
      <Fit w={39} className="mt-[6px] ml-[853px] text-[15px] leading-[16px] text-[#ddd]">12:12</Fit>
      <div className="ml-[39px] w-px bg-[#666]" />
    </div>
  );
}

export default function App() {
  return (
    <div className="h-[1152px] w-[2048px] overflow-hidden bg-linear-to-b from-[#fdfaf9] via-[#f8c2a0] via-70% to-[#fad2b8] font-['Open_Sans','Noto_Sans',sans-serif] font-medium">
      <div className="flex h-[81px] items-center bg-linear-to-b from-[#fefaf8] to-[#fdf2ec] pl-[15px]">
        <Fit w={817} className="mt-[7px] font-['Lato','Liberation_Sans',sans-serif] text-[53px] leading-[64px] font-bold text-black [-webkit-text-stroke:0.700px_black] [text-shadow:2px_3px_3px_#888]">
          Touring the PowerPoint Interface
        </Fit>
      </div>
      <div className="ml-[16px] flex w-[2032px] flex-col">
        <TitleBar />
        <Tabs />
        <Ribbon />
        <Body />
        <StatusBar />
        <Taskbar />
      </div>
    </div>
  );
}
